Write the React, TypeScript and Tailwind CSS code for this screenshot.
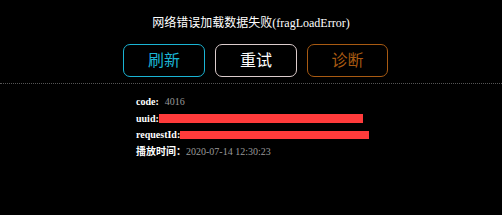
export default function App() {
  const font = "font-['Liberation_Serif','Noto_Sans_CJK_SC',serif]";
  return (
    <div className={`w-[502px] h-[215px] bg-black ${font}`}>
      <div className="pt-[16px] text-center text-[12px] leading-[14px] text-white">
        网络错误加载数据失败(fragLoadError)
      </div>

      <div className="mt-[14px] flex gap-[10px] pl-[123px]">
        <button className="w-[82px] h-[33px] rounded-[7px] border border-[#1ab4d4] text-[16px] text-[#1ab4d4]">
          刷新
        </button>
        <button className="w-[82px] h-[33px] rounded-[7px] border border-[#dccccc] text-[16px] text-white">
          重试
        </button>
        <button className="w-[81px] h-[33px] rounded-[7px] border border-[#a85a12] text-[16px] text-[#a85a12]">
          诊断
        </button>
      </div>

      <div className="mt-[6px] border-t border-dotted border-[#555]" />

      <div className="pl-[136px] pt-[10px] text-[10px] leading-[16.5px]">
        <div className="flex items-center">
          <span className="font-bold text-white">code:</span>
          <span className="ml-[6px] text-[#9a9a9a]">4016</span>
        </div>
        <div className="flex items-center">
          <span className="font-bold text-white">uuid:</span>
          <span className="h-[9px] w-[204px] bg-[#ff3b3b]" />
        </div>
        <div className="flex items-center">
          <span className="font-bold text-white">requestId:</span>
          <span className="h-[8px] w-[189px] bg-[#ff3b3b]" />
        </div>
        <div className="flex items-center">
          <span className="font-bold text-white">播放时间：</span>
          <span className="text-[#9a9a9a]">2020-07-14 12:30:23</span>
        </div>
      </div>
    </div>
  );
}
